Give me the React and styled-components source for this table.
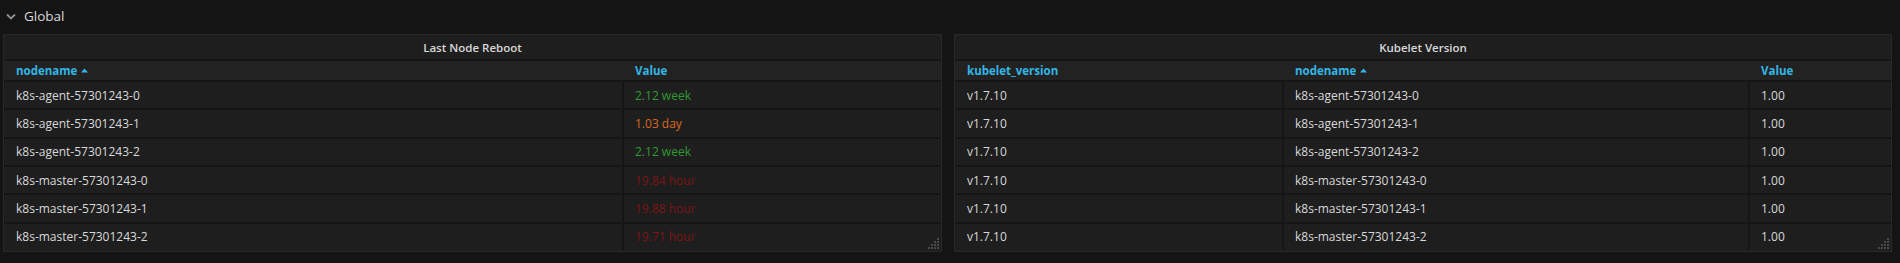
import styled, { createGlobalStyle } from "styled-components";

const GlobalStyle = createGlobalStyle`
    body {
        margin: 0;
        background: #141414;
        font-family: "Open Sans", "Liberation Sans", sans-serif;
    }
`;

const Page = styled.div`
    width: 1900px;
    height: 263px;
    background: #141414;
    overflow: hidden;
`;

const RowHeader = styled.div`
    height: 34px;
    display: flex;
    align-items: center;
    gap: 8px;
    padding-left: 6px;
    color: #d8d9da;
    font-size: 13.5px;
    box-sizing: border-box;
    padding-bottom: 2px;
`;

const Panels = styled.div`
    display: grid;
    grid-template-columns: 939px 938px;
    gap: 12px;
    padding-left: 3px;
`;

const Panel = styled.div`
    position: relative;
    height: 218px;
    box-sizing: border-box;
    border: 1px solid #292828;
    background: #1f1e1e;
    display: flex;
    flex-direction: column;
    padding-bottom: 1px;
`;

const Title = styled.div`
    height: 24px;
    flex: none;
    display: flex;
    align-items: center;
    justify-content: center;
    color: #d8d9da;
    font-size: 11.5px;
    font-weight: 600;
`;

const Row = styled.div`
    display: grid;
    grid-template-columns: ${(p) => p.$cols};
    flex: ${(p) => (p.$head ? "none" : "1")};
    height: ${(p) => (p.$head ? "21px" : "auto")};
    background: ${(p) => (p.$head ? "#232222" : "#1f1e1e")};
    border-top: 2px solid #161515;
    box-sizing: border-box;
`;

const Cell = styled.div`
    display: flex;
    align-items: center;
    gap: 4px;
    padding-left: ${(p) => (p.$first ? "12px" : "11px")};
    border-left: ${(p) => (p.$first ? "none" : p.$head ? "2px solid transparent" : "2px solid #161515")};
    color: ${(p) => p.$color || "#d8d9da"};
    font-size: 12px;
    font-weight: ${(p) => (p.$head ? 700 : 400)};
    white-space: nowrap;
`;

const HeadCell = styled(Cell)`
    color: #33b5e5;
    font-size: 11.5px;
`;

const Grip = styled.svg`
    position: absolute;
    right: 1px;
    bottom: 1px;
`;

const Chevron = () => (
    <svg width="10" height="7" viewBox="0 0 10 7">
        <polyline points="1,1.5 5,5.5 9,1.5" fill="none" stroke="#8e8e8e" strokeWidth="1.8" />
    </svg>
);

const SortArrow = () => (
    <svg width="7" height="5" viewBox="0 0 7 5">
        <polygon points="0,4.5 3.5,0.5 7,4.5" fill="#33b5e5" />
    </svg>
);

const ResizeGrip = () => {
    const dots = [];
    for (let r = 0; r < 4; r++) {
        for (let c = 3 - r; c < 4; c++) {
            dots.push(<rect key={`${r}-${c}`} x={c * 3} y={r * 3} width="2" height="2" fill="#4a4a4a" />);
        }
    }
    return (
        <Grip width="12" height="12" viewBox="0 0 12 12">
            {dots}
        </Grip>
    );
};

const GREEN = "#2f9a2f";
const ORANGE = "#d9691f";
const RED = "#7c1515";

const reboots = [
    { node: "k8s-agent-57301243-0", value: "2.12 week", color: GREEN },
    { node: "k8s-agent-57301243-1", value: "1.03 day", color: ORANGE },
    { node: "k8s-agent-57301243-2", value: "2.12 week", color: GREEN },
    { node: "k8s-master-57301243-0", value: "19.84 hour", color: RED },
    { node: "k8s-master-57301243-1", value: "19.88 hour", color: RED },
    { node: "k8s-master-57301243-2", value: "19.71 hour", color: RED },
];

const kubelets = reboots.map((r) => r.node);

function TablePanel({ title, cols, headers, rows }) {
    return (
        <Panel>
            <Title>{title}</Title>
            <Row $head $cols={cols}>
                {headers.map((h, i) => (
                    <HeadCell key={h.label} $head $first={i === 0}>
                        {h.label}
                        {h.sorted && <SortArrow />}
                    </HeadCell>
                ))}
            </Row>
            {rows.map((row, ri) => (
                <Row key={ri} $cols={cols}>
                    {row.map((cell, i) => (
                        <Cell key={i} $first={i === 0} $color={cell.color}>
                            {cell.text}
                        </Cell>
                    ))}
                </Row>
            ))}
            <ResizeGrip />
        </Panel>
    );
}

function App() {
    return (
        <Page>
            <GlobalStyle />
            <RowHeader>
                <Chevron />
                <span>Global</span>
            </RowHeader>
            <Panels>
                <TablePanel
                    title="Last Node Reboot"
                    cols="618px 1fr"
                    headers={[{ label: "nodename", sorted: true }, { label: "Value" }]}
                    rows={reboots.map((r) => [{ text: r.node }, { text: r.value, color: r.color }])}
                />
                <TablePanel
                    title="Kubelet Version"
                    cols="327px 466px 1fr"
                    headers={[{ label: "kubelet_version" }, { label: "nodename", sorted: true }, { label: "Value" }]}
                    rows={kubelets.map((n) => [{ text: "v1.7.10" }, { text: n }, { text: "1.00" }])}
                />
            </Panels>
        </Page>
    );
}

export default App;
